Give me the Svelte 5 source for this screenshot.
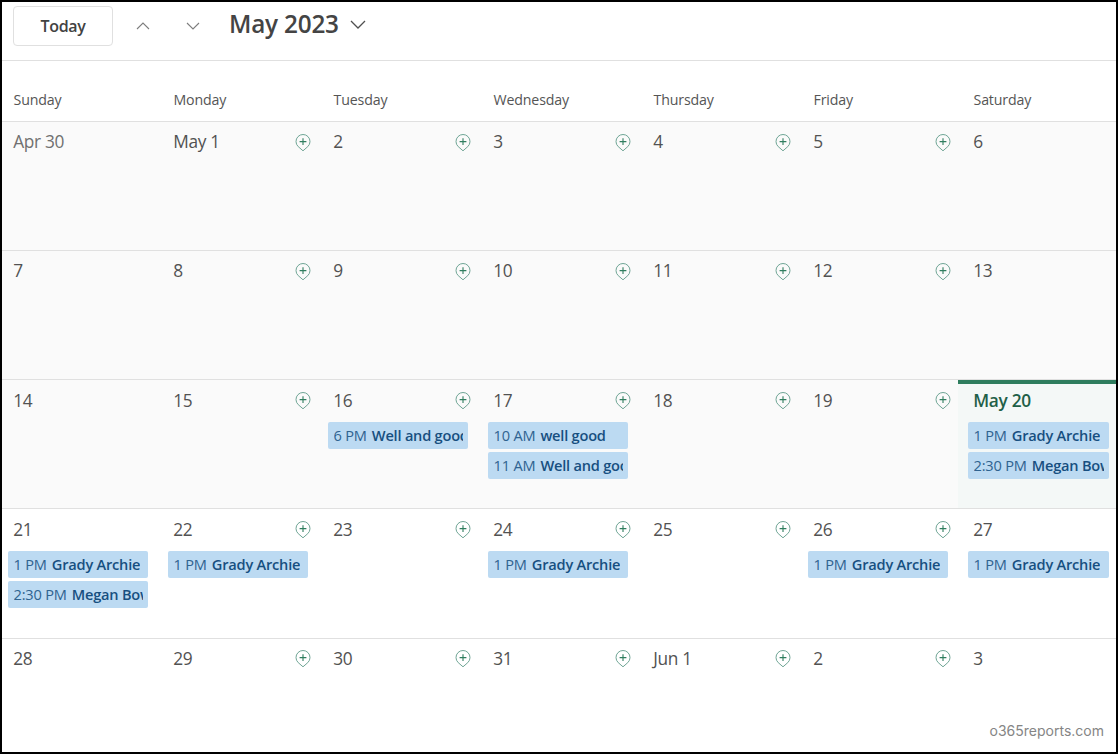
<script lang="ts">
  type Ev = { time: string; title: string };
  type Day = { label: string; add?: boolean; muted?: boolean; today?: boolean; events?: Ev[] };

  const dayNames = ['Sunday', 'Monday', 'Tuesday', 'Wednesday', 'Thursday', 'Friday', 'Saturday'];
  const grady: Ev = { time: '1 PM', title: 'Grady Archie' };
  const megan: Ev = { time: '2:30 PM', title: 'Megan Bowen' };

  const weeks: { past: boolean; days: Day[] }[] = [
    {
      past: true,
      days: [
        { label: 'Apr 30', muted: true },
        { label: 'May 1', add: true },
        { label: '2', add: true },
        { label: '3', add: true },
        { label: '4', add: true },
        { label: '5', add: true },
        { label: '6' }
      ]
    },
    {
      past: true,
      days: [
        { label: '7' },
        { label: '8', add: true },
        { label: '9', add: true },
        { label: '10', add: true },
        { label: '11', add: true },
        { label: '12', add: true },
        { label: '13' }
      ]
    },
    {
      past: true,
      days: [
        { label: '14' },
        { label: '15', add: true },
        { label: '16', add: true, events: [{ time: '6 PM', title: 'Well and good' }] },
        {
          label: '17',
          add: true,
          events: [
            { time: '10 AM', title: 'well good' },
            { time: '11 AM', title: 'Well and good' }
          ]
        },
        { label: '18', add: true },
        { label: '19', add: true },
        { label: 'May 20', today: true, events: [grady, megan] }
      ]
    },
    {
      past: false,
      days: [
        { label: '21', events: [grady, megan] },
        { label: '22', add: true, events: [grady] },
        { label: '23', add: true },
        { label: '24', add: true, events: [grady] },
        { label: '25', add: true },
        { label: '26', add: true, events: [grady] },
        { label: '27', events: [grady] }
      ]
    },
    {
      past: false,
      days: [
        { label: '28' },
        { label: '29', add: true },
        { label: '30', add: true },
        { label: '31', add: true },
        { label: 'Jun 1', add: true },
        { label: '2', add: true },
        { label: '3' }
      ]
    }
  ];
</script>

<div class="frame">
  <header class="toolbar">
    <button class="today-btn">Today</button>
    <button class="nav-btn" aria-label="Previous month">
      <svg width="14" height="8" viewBox="0 0 14 8"><path d="M1 7 L7 1 L13 7" /></svg>
    </button>
    <button class="nav-btn" aria-label="Next month">
      <svg width="14" height="8" viewBox="0 0 14 8"><path d="M1 1 L7 7 L13 1" /></svg>
    </button>
    <h1 class="month">May 2023</h1>
    <svg class="month-caret" width="16" height="9" viewBox="0 0 16 9"><path d="M1 1 L8 8 L15 1" /></svg>
  </header>

  <div class="day-names">
    {#each dayNames as name}
      <div class="day-name">{name}</div>
    {/each}
  </div>

  {#each weeks as week}
    <div class="week" class:past={week.past}>
      {#each week.days as day}
        <div class="cell" class:today={day.today}>
          <div class="cell-top">
            <span class="date" class:muted={day.muted}>{day.label}</span>
            {#if day.add}
              <svg class="add" width="16" height="18" viewBox="0 0 16 18">
                <path class="pin" d="M8 16.8 L3.2 12.6 A7 7 0 1 1 12.8 12.6 Z" />
                <path class="plus" d="M8 4.2 V11 M4.6 7.6 H11.4" />
              </svg>
            {/if}
          </div>
          {#each day.events ?? [] as ev}
            <div class="event">
              <span class="event-inner"><span class="time">{ev.time}</span> <span class="title">{ev.title}</span></span>
            </div>
          {/each}
        </div>
      {/each}
    </div>
  {/each}

  <span class="watermark">o365reports.com</span>
</div>

<style>
  :global(body) {
    margin: 0;
    background: #fff;
  }

  .frame {
    position: relative;
    width: 1118px;
    height: 754px;
    box-sizing: border-box;
    border: 2px solid #000;
    overflow: hidden;
    background: #fff;
    font-family: "Open Sans", "Noto Sans", sans-serif;
    color: #424242;
  }

  /* Top bar */
  .toolbar {
    display: flex;
    align-items: center;
    height: 48px;
    padding: 0 0 10px 11px;
    border-bottom: 1px solid #e0e0e0;
  }

  .today-btn {
    width: 100px;
    height: 40px;
    background: #fff;
    border: 1px solid #e0e0e0;
    border-radius: 4px;
    font: 600 16px "Open Sans", sans-serif;
    letter-spacing: -0.3px;
    color: #424242;
  }

  .nav-btn {
    width: 50px;
    height: 40px;
    padding: 0;
    background: none;
    border: none;
    display: flex;
    align-items: center;
    justify-content: center;
  }

  .today-btn + .nav-btn {
    margin-left: 5px;
  }

  .nav-btn svg path,
  .month-caret path {
    fill: none;
    stroke: #7d7d7d;
    stroke-width: 1.1;
  }

  .month-caret path {
    stroke: #505050;
    stroke-width: 1.3;
  }

  .month {
    margin: -5px 0 0 11px;
    font-size: 24.3px;
    font-weight: 600;
    letter-spacing: -0.2px;
    color: #444;
  }

  .month-caret {
    margin: -4px 0 0 11px;
  }

  /* Weekday header */
  .day-names,
  .week {
    display: grid;
    grid-template-columns: repeat(6, 160px) 161px;
    margin-left: -4px;
  }

  .day-names {
    height: 60px;
    align-items: end;
    border-bottom: 1px solid #e0e0e0;
  }

  .day-name {
    padding: 0 0 12px 15.5px;
    font-size: 14.2px;
    letter-spacing: -0.15px;
    color: #555;
  }

  /* Week rows */
  .week {
    height: 128.15px;
    border-bottom: 1px solid #e0e0e0;
  }

  .week:last-of-type {
    border-bottom: none;
  }

  .week.past {
    background: #fafafa;
  }

  .cell {
    min-width: 0;
    padding: 0 10px;
    box-sizing: border-box;
  }

  .cell-top {
    display: flex;
    align-items: center;
    justify-content: space-between;
    height: 38px;
    margin: 0 -3px 4px 0;
    padding-left: 5.2px;
  }

  .date {
    margin-top: 1.6px;
    font-size: 17.3px;
    letter-spacing: -0.3px;
    color: #525252;
  }

  .date.muted {
    color: #707070;
  }

  .add {
    margin-top: 3px;
  }

  .pin {
    fill: none;
    stroke: #6fa595;
    stroke-width: 1;
  }

  .plus {
    fill: none;
    stroke: #2e7d5e;
    stroke-width: 1.1;
  }

  .cell.today {
    background: #f4f8f7;
    border-top: 4px solid #2e7d5e;
  }

  .cell.today .cell-top {
    height: 32px;
    margin-bottom: 6px;
  }

  .cell.today .date {
    margin-top: 0;
    font-weight: 600;
    color: #1f6048;
  }

  /* Event chips */
  .event {
    box-sizing: border-box;
    height: 27px;
    margin-bottom: 3px;
    padding: 0 5px 1px 5.5px;
    display: flex;
    align-items: center;
    background: #bcdaf2;
    border-radius: 2px;
    font-size: 14.6px;
  }

  .event-inner {
    overflow: hidden;
    white-space: nowrap;
    letter-spacing: -0.2px;
  }

  .time {
    color: #2f6390;
    margin-right: 1.5px;
  }

  .title {
    font-weight: 600;
    letter-spacing: -0.22px;
    color: #174f80;
  }

  .watermark {
    position: absolute;
    right: 12px;
    bottom: 13px;
    font-family: Inter, sans-serif;
    font-size: 14px;
    color: #858585;
  }
</style>
